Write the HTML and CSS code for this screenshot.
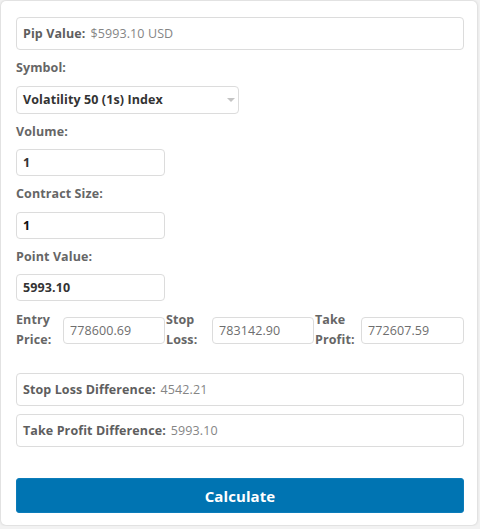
FILE: index.html
```html
<!DOCTYPE html>
<html>
<head>
<meta charset="utf-8">
<link rel="stylesheet" href="styles.css">
</head>
<body>
<div class="card">
  <div class="info"><span class="k">Pip Value:</span><span class="v">$5993.10 USD</span></div>

  <label class="lbl">Symbol:</label>
  <div class="select">Volatility 50 (1s) Index<span class="caret"></span></div>

  <label class="lbl">Volume:</label>
  <input class="inp strong" value="1">

  <label class="lbl">Contract Size:</label>
  <input class="inp strong dark" value="1">

  <label class="lbl">Point Value:</label>
  <input class="inp strong" value="5993.10">

  <div class="prices">
    <div class="pcol"><label class="plbl">Entry Price:</label><input class="pinp" value="778600.69"></div>
    <div class="pcol"><label class="plbl">Stop Loss:</label><input class="pinp" value="783142.90"></div>
    <div class="pcol"><label class="plbl">Take Profit:</label><input class="pinp" value="772607.59"></div>
  </div>

  <div class="info diff"><span class="k">Stop Loss Difference:</span><span class="v">4542.21</span></div>
  <div class="info diff2"><span class="k">Take Profit Difference:</span><span class="v">5993.10</span></div>

  <button class="btn">Calculate</button>
</div>
</body>
</html>
```
FILE: styles.css
```css
html, body {
  margin: 0;
  padding: 0;
  background: #f2f2f2;
}
body {
  padding: 1px;
  font-family: "Open Sans", "Liberation Sans", sans-serif;
  font-size: 12.5px;
  letter-spacing: 0.1px;
  color: #666;
}
.card {
  width: 476px;
  box-sizing: border-box;
  background: #fff;
  border-radius: 5px;
  box-shadow: 0 0 3px rgba(0,0,0,0.18);
  padding: 16px 13px 12px 15px;
  display: flex;
  flex-direction: column;
  align-items: flex-start;
}
.info {
  align-self: stretch;
  height: 33px;
  box-sizing: border-box;
  border: 1px solid #dcdcdc;
  border-radius: 4px;
  padding: 0 6px;
  display: flex;
  align-items: center;
  gap: 5px;
}
.k {
  font-weight: 700;
  color: #5e5e5e;
}
.v {
  color: #858585;
}
.lbl {
  display: block;
  font-weight: 700;
  color: #666;
  line-height: 18px;
  margin: 9px 0 8.5px;
}
.select {
  width: 223px;
  height: 28px;
  box-sizing: border-box;
  border: 1px solid #dcdcdc;
  border-radius: 4px;
  padding: 0 6px;
  display: flex;
  align-items: center;
  font-weight: 700;
  color: #333;
  position: relative;
}
.caret {
  position: absolute;
  right: 3px;
  top: 11px;
  width: 0;
  height: 0;
  border-left: 4px solid transparent;
  border-right: 4px solid transparent;
  border-top: 4px solid #c4c4c4;
}
.inp, .pinp {
  height: 27px;
  box-sizing: border-box;
  border: 1px solid #dcdcdc;
  border-radius: 4px;
  padding: 0 6px;
  margin: 0;
  font: inherit;
  letter-spacing: inherit;
  color: #6e6e6e;
  background: #fff;
  outline: none;
}
.inp {
  width: 149px;
}
.strong {
  font-weight: 700;
  color: #333;
}
.dark {
  color: #111;
}
.prices {
  align-self: stretch;
  margin-top: 9px;
  height: 40px;
  display: grid;
  grid-template-columns: 149px 149px 150px;
}
.pcol {
  display: flex;
  align-items: center;
}
.plbl {
  width: 47px;
  flex: none;
  font-weight: 700;
  color: #666;
  line-height: 20px;
  padding-left: 1px;
  box-sizing: border-box;
}
.pcol:first-child .plbl {
  padding-left: 0;
}
.pinp {
  flex: 1;
  min-width: 0;
  width: 100%;
}
.diff {
  margin-top: 23px;
}
.diff2 {
  margin-top: 8px;
}
.btn {
  align-self: stretch;
  margin-top: 31px;
  height: 35px;
  border: 1px solid #0b7cba;
  border-radius: 3px;
  background: #0074b2;
  color: #fff;
  font-family: inherit;
  font-size: 15px;
  font-weight: 700;
  letter-spacing: 0.1px;
  padding: 0;
}
```
